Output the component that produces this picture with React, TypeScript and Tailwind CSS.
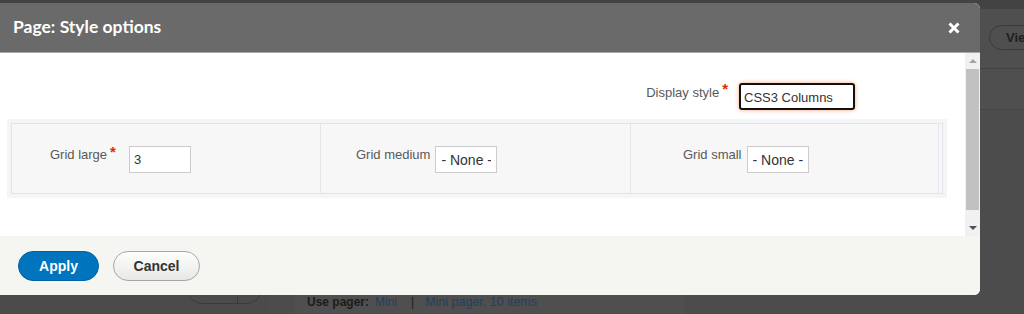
import { useState } from "react";

const fields = [
  { label: "Grid large", required: true, value: "3", kind: "text", pad: "pl-[38px]", gap: "ml-[13px]" },
  { label: "Grid medium", required: false, value: "- None -", kind: "select", pad: "pl-[35px]", gap: "ml-[5px]" },
  { label: "Grid small", required: false, value: "- None -", kind: "select", pad: "pl-[52px]", gap: "ml-[5px]" },
];

const Star = () => (
  <span className="ml-[3px] text-[15px] font-bold leading-[12px] text-[#e62600]">*</span>
);

const Backdrop = () => (
  <div className="flex h-full flex-col">
    <div className="h-[9px] bg-[#434343]" />
    <div className="flex h-[60px] items-start border-b border-[#404040] bg-[#4f4f4f] pl-[989px] pt-[16px]">
      <div className="flex h-[25px] shrink-0 items-center rounded-full border border-[#3a3a3a] pl-[16px] pr-[14px] text-[13px] font-bold text-[#1f1f1f]">
        View
      </div>
    </div>
    <div className="h-[41px] border-b border-[#454545] bg-[#4f4f4f]" />
    <div className="flex flex-1">
      <div className="flex w-[269px] flex-col justify-end bg-[#4b4b4b] pb-[10px] pl-[187px]">
        <div className="flex h-[30px] w-[75px] rounded-full border border-[#3a3a3a]">
          <div className="w-[50px] border-r border-[#3a3a3a]" />
        </div>
      </div>
      <div className="ml-[26px] flex w-[389px] flex-col justify-end bg-[#4f4f4f] pb-[5px] pl-[12px]">
        <div className="flex items-center whitespace-nowrap text-[12px] leading-[14px]">
          <span className="font-bold text-[#1c1c1c]">Use pager:</span>
          <span className="ml-[6px] text-[#22405f]">Mini</span>
          <span className="ml-[14px] text-[#1c1c1c]">|</span>
          <span className="ml-[11px] text-[12.5px] text-[#22405f]">Mini pager, 10 items</span>
        </div>
      </div>
    </div>
  </div>
);

const Scrollbar = () => (
  <div className="flex w-[15px] flex-col bg-[#f1f1f1]">
    <div className="flex h-[16px] items-center justify-center">
      <div className="h-0 w-0 border-x-[4px] border-b-[4px] border-x-transparent border-b-[#a3a3a3]" />
    </div>
    <div className="mx-[1px] h-[141px] bg-[#c1c1c1]" />
    <div className="flex-1" />
    <div className="flex h-[17px] items-center justify-center">
      <div className="h-0 w-0 border-x-[4px] border-t-[4px] border-x-transparent border-t-[#505050]" />
    </div>
  </div>
);

const App = () => {
  const [style, setStyle] = useState("CSS3 Columns");
  const [large, setLarge] = useState("3");

  return (
    <div className="relative h-[314px] w-[1024px] overflow-hidden bg-[#4c4c4c] font-['Liberation_Sans',Arial,sans-serif]">
      <Backdrop />

      <div className="absolute left-0 top-[3px] flex h-[292px] w-[980px] flex-col overflow-hidden rounded-r-[6px] bg-white">
        <div className="flex h-[50px] items-center justify-between border-b border-[#a8a8a8] bg-[#6a6a6a] pl-[13px] pr-[20px]">
          <h1 className="font-['Lato',sans-serif] text-[17.5px] font-bold text-white">Page: Style options</h1>
          <svg width="12" height="12" viewBox="0 0 12 12">
            <path d="M1.5 1.5 10.5 10.5 M10.5 1.5 1.5 10.5" stroke="#fff" strokeWidth="3" />
          </svg>
        </div>

        <div className="flex h-[183px]">
          <div className="flex-1 pt-[30px]">
            <div className="flex items-start justify-end pr-[110px]">
              <label className="pt-[2px] text-[13px] leading-[15px] text-[#595959]">Display style</label>
              <Star />
              <input
                value={style}
                onChange={(e) => setStyle(e.target.value)}
                className="ml-[11px] h-[27px] w-[116px] rounded-[3px] border-2 border-[#111] px-[3px] pt-[2px] text-[13px] text-[#333] shadow-[0_0_4px_#f9a27c] outline-none"
              />
            </div>

            <div className="ml-[7px] mt-[9px] w-[940px] bg-[#f4f5f6] p-[4px]">
              <div className="grid h-[71px] grid-cols-[309px_310px_1fr] border border-[#e1e4e8] bg-[#f7f7f7] pr-[3px]">
                {fields.map((f, i) => (
                  <div
                    key={f.label}
                    className={`flex items-start border-r pt-[22px] ${f.pad} ${i === 2 ? "border-[#e4e6e9]" : "border-[#e6e6e6]"}`}
                  >
                    <label className="pt-[1px] text-[13px] leading-[15px] text-[#595959]">{f.label}</label>
                    {f.required && <Star />}
                    {f.kind === "text" ? (
                      <input
                        value={large}
                        onChange={(e) => setLarge(e.target.value)}
                        className={`${f.gap} h-[27px] w-[62px] border border-[#cccccc] bg-white px-[4px] text-[13px] text-[#333] outline-none`}
                      />
                    ) : (
                      <select
                        defaultValue="none"
                        className={`${f.gap} h-[27px] w-[62px] appearance-none border border-[#cccccc] bg-white px-[5px] pt-[2px] text-[14px] text-[#333] outline-none`}
                      >
                        <option value="none">{f.value}</option>
                      </select>
                    )}
                  </div>
                ))}
              </div>
            </div>
          </div>
          <Scrollbar />
        </div>

        <div className="flex h-[59px] items-start gap-[14px] bg-[#f5f5f2] pl-[18px] pt-[15px]">
          <button className="h-[30px] w-[81px] rounded-full border border-[#0062a0] bg-[#0074bd] text-[14px] font-bold text-white">
            Apply
          </button>
          <button className="h-[30px] w-[87px] rounded-full border border-[#a6a6a6] bg-gradient-to-b from-[#fefefe] to-[#e8e8e4] text-[14px] font-bold text-[#333]">
            Cancel
          </button>
        </div>
      </div>
    </div>
  );
};

export default App;
